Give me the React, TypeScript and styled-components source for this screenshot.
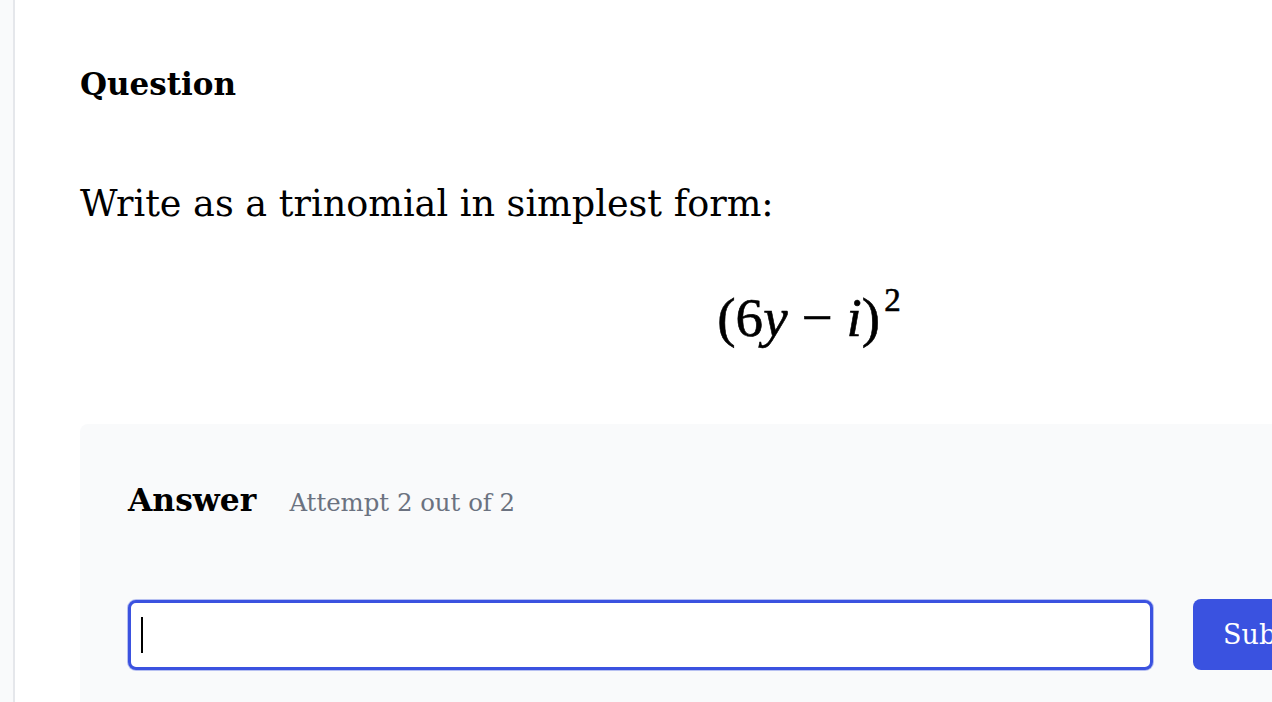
import styled, { createGlobalStyle } from "styled-components";

const GlobalStyle = createGlobalStyle`
  html, body {
    margin: 0;
    padding: 0;
    background: #ffffff;
    overflow: hidden;
  }
  body {
    font-family: "DejaVu Serif", "Liberation Serif", serif;
    color: #000000;
  }
`;

const Page = styled.div`
  display: flex;
  width: 1272px;
  height: 702px;
  overflow: hidden;
`;

const Rail = styled.div`
  flex: 0 0 13px;
  background: #f9fafb;
  border-right: 2px solid #e5e7eb;
`;

const Main = styled.main`
  flex: 0 0 auto;
  width: 1458px;
  padding: 62px 0 0 65px;
  box-sizing: content-box;
`;

const Heading = styled.h2`
  margin: 0;
  font-size: 31px;
  font-weight: 700;
  line-height: 44px;
`;

const Prompt = styled.p`
  margin: 72px 0 0;
  font-size: 36.6px;
  line-height: 52px;
`;

const MathLine = styled.div`
  margin: 56px 0 0;
  text-align: center;
  font-size: 55px;
  line-height: 64px;
  font-family: "Liberation Serif", "DejaVu Serif", serif;
  -webkit-text-stroke: 0.6px #000;
`;

const Var = styled.span`
  font-style: italic;
`;

const Op = styled.span`
  margin: 0 14px;
`;

const Sup = styled.sup`
  font-size: 33px;
  vertical-align: 0;
  position: relative;
  top: -25px;
  margin-left: 4px;
`;

const Panel = styled.section`
  margin-top: 67px;
  background: #f9fafb;
  border-radius: 8px 8px 0 0;
  padding: 54px 48px 40px;
  height: 300px;
`;

const AnswerHeader = styled.div`
  display: flex;
  align-items: baseline;
  gap: 33px;
`;

const AnswerTitle = styled.h3`
  margin: 0;
  font-size: 31.4px;
  font-weight: 700;
  line-height: 44px;
`;

const Attempt = styled.span`
  font-size: 24.4px;
  color: #6b7280;
`;

const InputRow = styled.div`
  display: flex;
  align-items: center;
  gap: 40px;
  margin-top: 77px;
`;

const InputWrap = styled.div`
  position: relative;
  flex: 0 0 1025px;
`;

const AnswerInput = styled.input`
  display: block;
  width: 100%;
  height: 70px;
  box-sizing: border-box;
  border: 3px solid #3b52e0;
  border-radius: 8px;
  background: #ffffff;
  padding: 0 14px;
  font-size: 28px;
  font-family: "DejaVu Serif", serif;
  outline: none;
  box-shadow: 0 0 0 1px rgba(59, 82, 224, 0.35);
  caret-color: transparent;
`;

const Caret = styled.span`
  position: absolute;
  left: 13px;
  top: 17px;
  width: 2px;
  height: 36px;
  background: #000000;
  pointer-events: none;
`;

const SubmitButton = styled.button`
  flex: 0 0 auto;
  height: 71px;
  padding: 0 30px;
  border: none;
  border-radius: 8px;
  background: #3a52e0;
  color: #ffffff;
  font-size: 27px;
  font-family: "DejaVu Serif", serif;
  white-space: nowrap;
  cursor: pointer;
`;

export default function App() {
  return (
    <>
      <GlobalStyle />
      <Page>
        <Rail />
        <Main>
          <Heading>Question</Heading>
          <Prompt>Write as a trinomial in simplest form:</Prompt>
          <MathLine>
            (6<Var>y</Var>
            <Op>−</Op>
            <Var>i</Var>)<Sup>2</Sup>
          </MathLine>
          <Panel>
            <AnswerHeader>
              <AnswerTitle>Answer</AnswerTitle>
              <Attempt>Attempt 2 out of 2</Attempt>
            </AnswerHeader>
            <InputRow>
              <InputWrap>
                <AnswerInput aria-label="Answer" />
                <Caret />
              </InputWrap>
              <SubmitButton>Submit</SubmitButton>
            </InputRow>
          </Panel>
        </Main>
      </Page>
    </>
  );
}
